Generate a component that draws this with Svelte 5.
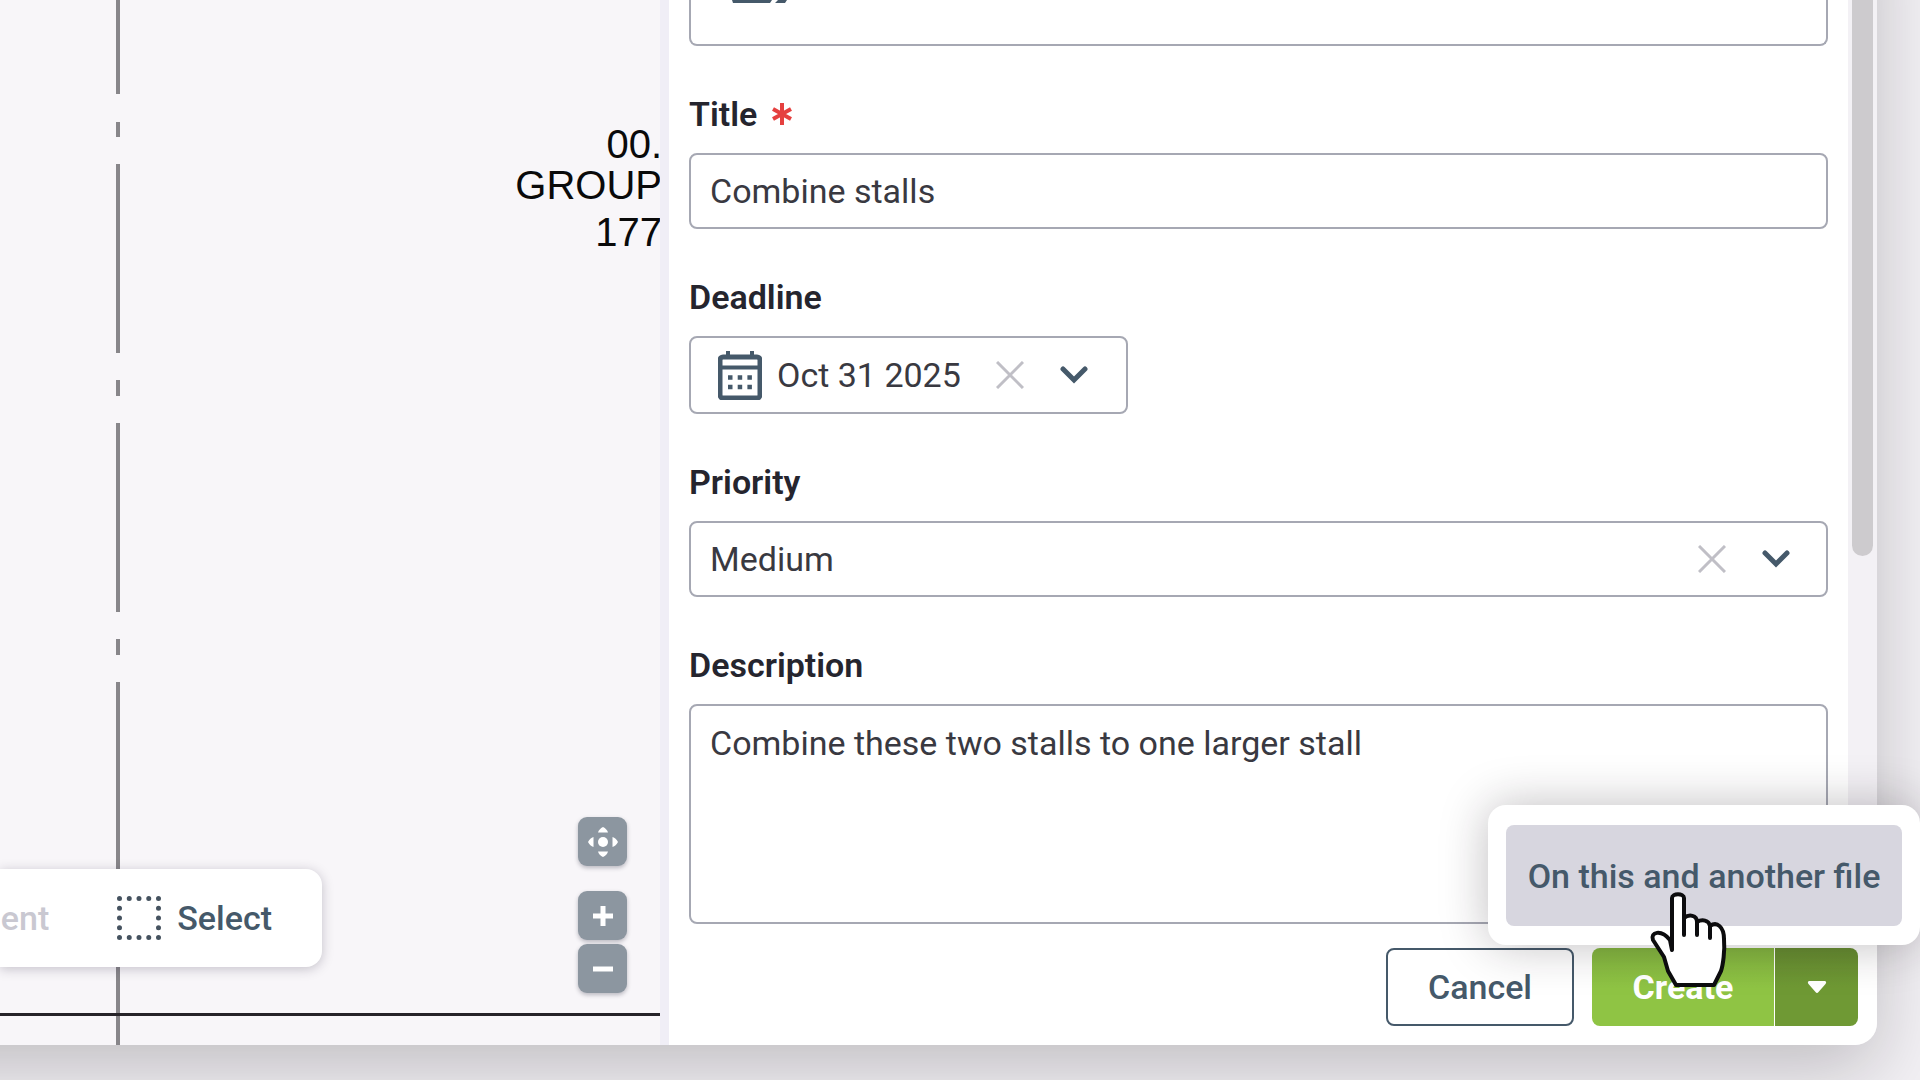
<script>
  let title = $state('Combine stalls');
  let description = $state('Combine these two stalls to one larger stall');
  let priority = $state('Medium');
  let deadline = $state('Oct 31 2025');
</script>

<main class="page">
  <div class="window">
    <section class="plan" aria-label="Floor plan">
      <svg class="drawing" width="100%" height="100%" aria-hidden="true">
        <path d="M118 0V94M118 122V137M118 164V353M118 380V396M118 423V612M118 639V655M118 682V2000" stroke="#88868a" stroke-width="4" />
        <rect x="0" y="1013" width="4000" height="3" fill="#262329" />
      </svg>
      <div class="plan-note">
        <span>00.</span>
        <span>GROUP</span>
        <span class="number">177</span>
      </div>
      <div class="toolbar">
        <button class="tool off" type="button" disabled>Comment</button>
        <button class="tool" type="button">
          <svg width="44" height="44" viewBox="0 0 44 44" fill="none" stroke="#45525f" stroke-width="5" stroke-linecap="round" stroke-dasharray="0 9.75" aria-hidden="true">
            <path d="M2.500 2.500H42M2.500 41.500H42M2.500 12.250V38M41.500 12.250V38" />
          </svg>
          Select
        </button>
      </div>
      <div class="zoomer">
        <button type="button" class="fit" aria-label="Fit to screen">
          <svg width="34" height="34" viewBox="0 0 34 34" fill="#fff" aria-hidden="true">
            <circle cx="17" cy="17" r="5" />
            <path d="M17 2q4 2 5 5.500h-10q1-3.500 5-5.500zM17 32q4-2 5-5.500h-10q1 3.500 5 5.500zM2 17q2-4 5.500-5v10q-3.500-1-5.500-5zM32 17q-2-4-5.500-5v10q3.500-1 5.500-5z" />
          </svg>
        </button>
        <button type="button" aria-label="Zoom in">
          <svg width="20" height="20" viewBox="0 0 20 20" stroke="#fff" stroke-width="5" aria-hidden="true"><path d="M0 10H20M10 0V20" /></svg>
        </button>
        <button type="button" aria-label="Zoom out">
          <svg width="20" height="20" viewBox="0 0 20 20" stroke="#fff" stroke-width="5" aria-hidden="true"><path d="M0 10H20" /></svg>
        </button>
      </div>
    </section>

    <form class="panel" onsubmit={(e) => e.preventDefault()}>
      <div class="scroller">
        <div class="fields">
          <div class="preview">
            <svg width="62" height="4" viewBox="0 0 62 4" fill="#45596a" aria-hidden="true"><path d="M0 0H40L38 3H1ZM46 0H55L53 3H43Z" /></svg>
          </div>

          <div class="field">
            <label for="title">Title
              <svg width="20" height="22" viewBox="0 0 20 22" stroke="#e5403f" stroke-width="4" aria-hidden="true"><path d="M10 0V22M1 6L19 16M19 6L1 16" /></svg>
            </label>
            <input id="title" class="box" type="text" bind:value={title} required />
          </div>

          <div class="field">
            <label for="deadline">Deadline</label>
            <div class="box date">
              <svg class="cal" width="44" height="50" viewBox="0 0 44 50" fill="none" stroke="#45596a" stroke-width="4" aria-hidden="true">
                <rect x="2" y="7" width="40" height="41" rx="3" stroke-width="5" />
                <path d="M2 17.500H42M10 1V8M34 1V8" />
                <path d="M10 27.500H34M10 37H34" stroke-width="4.500" stroke-dasharray="4.500 5.200" />
              </svg>
              <input id="deadline" type="text" bind:value={deadline} />
              <button type="button" class="icon" aria-label="Clear deadline" onclick={() => (deadline = '')}>
                <svg width="28" height="28" viewBox="0 0 28 28" stroke="#c0bfc6" stroke-width="3" aria-hidden="true"><path d="M1 1L27 27M27 1L1 27" /></svg>
              </button>
              <button type="button" class="icon" aria-label="Open calendar">
                <svg width="28" height="18" viewBox="0 0 28 18" fill="none" stroke="#45596a" stroke-width="5" stroke-linecap="round" aria-hidden="true"><path d="M3 3L14 14L25 3" /></svg>
              </button>
            </div>
          </div>

          <div class="field">
            <label for="priority">Priority</label>
            <div class="box choice">
              <select id="priority" bind:value={priority}>
                <option>Low</option>
                <option>Medium</option>
                <option>High</option>
              </select>
              <button type="button" class="icon" aria-label="Clear priority" onclick={() => (priority = '')}>
                <svg width="28" height="28" viewBox="0 0 28 28" stroke="#c0bfc6" stroke-width="3" aria-hidden="true"><path d="M1 1L27 27M27 1L1 27" /></svg>
              </button>
              <svg width="28" height="18" viewBox="0 0 28 18" fill="none" stroke="#45596a" stroke-width="5" stroke-linecap="round" aria-hidden="true"><path d="M3 3L14 14L25 3" /></svg>
            </div>
          </div>

          <div class="field">
            <label for="description">Description</label>
            <textarea id="description" class="box" bind:value={description}></textarea>
          </div>
        </div>
        <div class="track"><div class="thumb"></div></div>
      </div>

      <footer class="actions">
        <button type="button" class="cancel">Cancel</button>
        <div class="split">
          <button type="submit" class="create">Create</button>
          <button type="button" class="more" aria-label="More create options" aria-expanded="true">
            <svg width="20" height="14" viewBox="0 0 20 14" fill="#fff" aria-hidden="true"><path d="M2 1H18Q20 2 18.500 4L11.500 12Q10 14 8.500 12L1.500 4Q0 2 2 1Z" /></svg>
          </button>
          <div class="menu" role="menu">
            <button type="button" role="menuitem">On this and another file</button>
            <svg class="pointer" width="80" height="100" viewBox="0 0 80 100" fill="#fff" stroke="#0c0c0e" stroke-width="4" stroke-linejoin="round" stroke-linecap="round" aria-hidden="true">
              <path d="M27 94L19 80L15 66L4 49C1 41 12 38 21 49L23 59V7C23 2 35 2 35 7V27C40 23 48 24 48 31C53 28 60 29 61 35C68 30 75 36 75 48C76 60 74 74 72 80L65 94Z" />
              <path d="M35 26V44M48 31V44M61 35V47" />
            </svg>
          </div>
        </div>
      </footer>
    </form>
  </div>
</main>

<style>
  :global(body) {
    margin: 0;
    background: #f2f0f4;
    overflow: hidden;
  }
  .page {
    box-sizing: border-box;
    min-height: 100vh;
    padding: 0 43px 35px 0;
    display: flex;
    font-family: Roboto, "Liberation Sans", sans-serif;
    font-size: 34px;
    line-height: 40px;
    color: #393941;
  }
  button, input, select, textarea {
    font: inherit;
    color: inherit;
    margin: 0;
    padding: 0;
    border: 0;
    background: none;
    outline: none;
  }
  svg { display: block; flex: none; }
  .window {
    position: relative;
    flex: 1;
    display: grid;
    grid-template-columns: minmax(0, 660fr) minmax(0, 1217fr);
    background: #fff;
    border-radius: 0 0 22px 0;
  }
  /* The window runs on past the left edge, and so does its shadow. */
  .window::before {
    content: "";
    position: absolute;
    z-index: -1;
    inset: -100px 0 0 -200px;
    border-radius: 22px;
    box-shadow: 0 24px 72px rgba(16, 12, 20, 0.22);
  }
  .plan {
    position: relative;
    overflow: hidden;
    background: #f8f6f9;
  }
  .drawing { position: absolute; inset: 0; }
  .plan-note {
    position: absolute;
    top: 124px;
    right: -2px;
    font: 40px/41px "Liberation Sans", sans-serif;
    color: #0a0a0a;
    display: grid;
    justify-items: end;
  }
  .number { padding-top: 6px; }
  .toolbar {
    position: absolute;
    left: 0;
    bottom: 78px;
    width: 322px;
    height: 98px;
    box-sizing: border-box;
    padding-right: 50px;
    display: flex;
    justify-content: flex-end;
    align-items: center;
    gap: 68px;
    overflow: hidden;
    background: #fff;
    border-radius: 0 16px 16px 0;
    box-shadow: 0 2px 12px rgba(40, 30, 60, 0.25);
  }
  .tool {
    display: flex;
    align-items: center;
    gap: 16px;
    font-weight: 500;
    color: #45596a;
  }
  .tool.off { color: #c9c8d1; }
  .zoomer {
    position: absolute;
    right: 33px;
    bottom: 52px;
    display: grid;
    gap: 4px;
  }
  .zoomer button {
    width: 49px;
    height: 49px;
    display: grid;
    place-items: center;
    border-radius: 9px;
    background: #8c96a0;
    box-shadow: 0 2px 4px rgba(40, 40, 60, 0.3);
  }
  .zoomer .fit { margin-bottom: 21px; }
  .panel {
    border-left: 9px solid #f0eef6;
    display: flex;
    flex-direction: column;
    min-width: 0;
  }
  .scroller { flex: 1; display: flex; }
  .fields {
    flex: 1;
    min-width: 0;
    padding: 0 20px;
    display: flex;
    flex-direction: column;
    gap: 48px;
  }
  .box {
    box-sizing: border-box;
    width: 100%;
    height: 76px;
    border: 2px solid #a6a8b3;
    border-radius: 8px;
    background: #fff;
  }
  .preview {
    height: 44px;
    padding-left: 41px;
    border: 2px solid #a6a8b3;
    border-top: 0;
    border-radius: 0 0 8px 8px;
  }
  .field { display: grid; gap: 19px; }
  label {
    height: 40px;
    display: flex;
    align-items: center;
    gap: 15px;
    font-weight: 600;
    color: #25252e;
  }
  input.box { padding: 0 19px; }
  .date, .choice {
    display: flex;
    align-items: center;
    gap: 36px;
  }
  .date { width: 439px; height: 78px; padding: 0 38px 0 27px; }
  .date input { flex: 1; min-width: 0; }
  .cal { margin-right: -21px; }
  .choice { padding: 0 36px 0 19px; }
  select { flex: 1; min-width: 0; appearance: none; }
  textarea.box {
    display: block;
    height: 220px;
    padding: 17px 19px;
    resize: none;
  }
  .track {
    width: 29px;
    box-sizing: border-box;
    padding: 0 4px;
    background: #f3f1f5;
  }
  .thumb {
    height: 556px;
    border-radius: 0 0 11px 11px;
    background: #cdcbce;
  }
  .actions {
    display: flex;
    justify-content: flex-end;
    gap: 18px;
    padding: 24px 19px 19px;
  }
  .actions button { height: 78px; font-weight: 500; }
  .cancel {
    box-sizing: border-box;
    width: 188px;
    border: 2px solid #45596a;
    border-radius: 8px;
    color: #45596a;
  }
  .split { position: relative; display: flex; gap: 1px; }
  .create {
    width: 182px;
    border-radius: 8px 0 0 8px;
    background: linear-gradient(#83b53f, #8fc444 50%);
    color: #fff;
  }
  .actions .create { font-weight: 700; }
  .more {
    width: 83px;
    display: grid;
    place-items: center;
    border-radius: 0 8px 8px 0;
    background: linear-gradient(#668c30, #6f9934 50%);
  }
  .menu {
    position: absolute;
    right: -62px;
    bottom: 81px;
    padding: 20px 18px 19px;
    border-radius: 18px;
    background: #fff;
    box-shadow: 0 0 48px rgba(30, 20, 30, 0.28);
  }
  .menu button {
    width: 396px;
    height: 101px;
    border-radius: 8px;
    background: #d7d6df;
    color: #45596a;
    white-space: nowrap;
  }
  .menu .pointer { position: absolute; left: 161px; top: 86px; }
</style>
